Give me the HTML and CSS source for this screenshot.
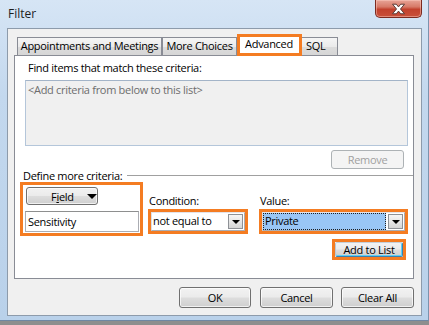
FILE: index.html
```html
<!DOCTYPE html>
<html>
<head>
<meta charset="utf-8">
<link rel="stylesheet" href="styles.css">
</head>
<body>
<div class="window">
  <div class="titlebar">
    <span class="title">Filter</span>
    <div class="close">
      <svg width="15" height="12" viewBox="0 0 15 12">
        <path d="M1.5 1.2 L5.3 1.2 L7.5 3.9 L9.7 1.2 L13.5 1.2 L9.5 6 L13.5 10.8 L9.7 10.8 L7.5 8.1 L5.3 10.8 L1.5 10.8 L5.5 6 Z" fill="#ffffff" stroke="#5a3a36" stroke-width="1" stroke-linejoin="round"/>
      </svg>
    </div>
  </div>
  <div class="client">
    <div class="tabs">
      <div class="tab w1">Appointments and Meetings</div>
      <div class="tab w2">More Choices</div>
      <div class="tab active w3">Advanced</div>
      <div class="tab w4">SQL</div>
    </div>
    <div class="panel">
      <div class="find-label">Find items that match these criteria:</div>
      <div class="listbox">&lt;Add criteria from below to this list&gt;</div>
      <div class="remove-row"><div class="btn disabled remove">Remove</div></div>
      <div class="define"><span class="define-text">Define more criteria:</span><span class="rule"></span></div>
      <div class="criteria">
        <div class="hl field-group">
          <div class="btn field-btn"><span class="field-text">F<u>i</u>eld</span><span class="tri big"></span></div>
          <div class="textbox">Sensitivity</div>
        </div>
        <div class="col cond-col">
          <div class="lbl">Condition:</div>
          <div class="hl combo-hl cond-hl">
            <div class="combo">
              <span class="combo-text">not equal to</span>
              <span class="drop"><span class="tri"></span></span>
            </div>
          </div>
        </div>
        <div class="col value-col">
          <div class="lbl">Value:</div>
          <div class="hl combo-hl value-hl">
            <div class="combo">
              <span class="combo-text selected">Private</span>
              <span class="drop"><span class="tri"></span></span>
            </div>
          </div>
        </div>
      </div>
      <div class="add-row">
        <div class="hl add-hl"><div class="btn default add">Add to List</div></div>
      </div>
    </div>
    <div class="footer">
      <div class="btn fbtn ok">OK</div>
      <div class="btn fbtn cancel">Cancel</div>
      <div class="btn fbtn clear">Clear All</div>
    </div>
  </div>
</div>
</body>
</html>
```

FILE: styles.css
```css
* { box-sizing: border-box; }
html, body { margin: 0; padding: 0; }
body {
  width: 429px;
  height: 325px;
  overflow: hidden;
  background: #8e8e8e;
  font-family: "Open Sans", "Noto Sans", sans-serif;
  font-size: 11px;
  letter-spacing: -0.3px;
  color: #000;
}
.window {
  width: 429px;
  height: 321px;
  background: linear-gradient(180deg, #d6e5f5 0%, #c3d8ee 30%, #b9d1ea 100%);
  border-right: 1px solid #7c93ad;
  border-bottom: 1px solid #6f87a3;
  padding-left: 7px;
}
.titlebar {
  height: 28px;
  display: flex;
  align-items: flex-start;
  justify-content: space-between;
  padding-right: 6px;
}
.title {
  font-size: 12px;
  letter-spacing: 0;
  margin-top: 5px;
  margin-left: 1px;
  color: #1e1e1e;
}
.close {
  width: 47px;
  height: 18px;
  border: 1px solid #7c2a20;
  border-top: none;
  border-radius: 0 0 5px 5px;
  background: linear-gradient(180deg, #e8a497 0%, #d77a68 40%, #c2412d 55%, #c9503a 100%);
  box-shadow: inset 0 0 0 1px rgba(255,210,200,0.45);
  display: flex;
  align-items: center;
  justify-content: center;
}
.client {
  width: 415px;
  height: 288px;
  border: 1px solid #8d9bab;
  background: #f0f0f0;
  display: flex;
  flex-direction: column;
}
.tabs {
  display: flex;
  align-items: flex-end;
  height: 22px;
  margin-top: 5px;
  margin-left: 9px;
  margin-bottom: -1px;
  position: relative;
  z-index: 2;
}
.tab {
  height: 18px;
  margin-bottom: 1px;
  border: 1px solid #898c95;
  border-bottom: none;
  background: linear-gradient(180deg, #f5f5f5 0%, #ebebeb 50%, #dcdcdc 51%, #d6d6d6 100%);
  text-align: center;
  line-height: 16px;
  white-space: nowrap;
}
.tab.w1 { width: 145px; }
.tab.w2 { width: 75px; }
.tab.w3 { width: 64px; }
.tab.w4 { width: 37px; text-align: left; padding-left: 4px; }
.tab.active {
  height: 22px;
  margin-bottom: 0;
  background: #ffffff;
  position: relative;
  line-height: 17px;
}
.tab.active::after {
  content: "";
  position: absolute;
  left: -1px;
  right: -2px;
  top: -1px;
  bottom: 0;
  border: 3px solid #f47c22;
}
.panel {
  margin-left: 6px;
  width: 400px;
  height: 224px;
  border: 1px solid #898c95;
  background: #ffffff;
  display: flex;
  flex-direction: column;
}
.find-label {
  padding-left: 13px;
  margin-top: 3px;
  line-height: 17px;
  height: 17px;
}
.listbox {
  margin-top: 4px;
  margin-left: 10px;
  width: 383px;
  height: 66px;
  border: 1px solid #b4c6da;
  border-top-color: #a3b4c8;
  background: #f0f0f0;
  color: #6d6d6d;
  padding: 1px 0 0 2px;
  line-height: 15px;
}
.remove-row {
  display: flex;
  justify-content: flex-end;
  padding-right: 9px;
  margin-top: 4px;
}
.btn {
  border: 1px solid #707070;
  border-radius: 3px;
  background: linear-gradient(180deg, #f2f2f2 0%, #ebebeb 48%, #dddddd 52%, #cfcfcf 100%);
  box-shadow: inset 0 0 0 1px rgba(255,255,255,0.7);
  display: flex;
  align-items: center;
  justify-content: center;
  white-space: nowrap;
}
.btn.disabled {
  border-color: #adb2b5;
  background: #f4f4f4;
  color: #a0a0a0;
  box-shadow: none;
}
.remove { width: 73px; height: 19px; }
.define {
  display: flex;
  align-items: center;
  height: 13px;
  padding-left: 8px;
}
.define-text { line-height: 13px; }
.rule {
  flex: 1;
  height: 2px;
  margin-left: 5px;
  margin-top: 1px;
  border-top: 1px solid #a0a0a0;
  border-bottom: 1px solid #ffffff;
}
.criteria {
  display: flex;
  align-items: flex-start;
  padding-left: 5px;
}
.hl {
  border: 3px solid #f47c22;
}
.field-group {
  width: 123px;
  height: 54px;
  display: flex;
  flex-direction: column;
  align-items: flex-start;
}
.field-btn {
  width: 72px;
  height: 18px;
  margin-top: 2px;
  margin-left: 3px;
  justify-content: flex-start;
  padding-left: 24px;
}
.field-text { width: 36px; }
.tri {
  display: inline-block;
  width: 0;
  height: 0;
  border-left: 4px solid transparent;
  border-right: 4px solid transparent;
  border-top: 4px solid #000;
}
.tri.big {
  border-left-width: 5px;
  border-right-width: 5px;
  border-top-width: 5px;
}
.textbox {
  margin-top: 6px;
  margin-left: 2px;
  width: 114px;
  height: 21px;
  border: 1px solid #abadb3;
  border-top-color: #8e8f8f;
  background: #fff;
  padding-left: 2px;
  line-height: 19px;
}
.col {
  display: flex;
  flex-direction: column;
}
.cond-col { margin-left: 5px; margin-top: 11px; }
.value-col { margin-left: 11px; margin-top: 11px; }
.lbl {
  height: 16px;
  line-height: 16px;
  padding-left: 1px;
}
.combo-hl { margin-top: 0; height: 25px; }
.cond-hl { width: 100px; }
.value-hl { width: 149px; }
.combo {
  height: 19px;
  border: 1px solid #abadb3;
  border-left-color: #dbdfe6;
  border-top-color: #e2e3ea;
  background: #fff;
  display: flex;
  align-items: center;
  padding: 0 1px 0 0;
}
.combo-text {
  flex: 1;
  height: 100%;
  padding-left: 1px;
  line-height: 16px;
}
.combo-text.selected {
  background: #99c6f5;
  outline: 1px dotted #202020;
  outline-offset: -1px;
  padding-left: 2px;
  margin-right: 2px;
}
.drop {
  width: 15px;
  height: 15px;
  border: 1px solid #8e9196;
  background: linear-gradient(180deg, #f6f6f6 0%, #e6e6e6 50%, #d4d4d4 100%);
  display: flex;
  align-items: center;
  justify-content: center;
}
.add-row {
  display: flex;
  justify-content: flex-end;
  padding-right: 7px;
  margin-top: 3px;
}
.add-hl { width: 74px; height: 21px; }
.add {
  width: 100%;
  height: 100%;
  border-color: #3c7fb1;
  border-left-color: #b9c9d6;
  border-top-color: #c4d0da;
  border-radius: 2px;
  box-shadow: inset -1px 0 0 #5ad1f5, inset 0 -1px 0 #5ad1f5;
  background: linear-gradient(180deg, #f2f2f2 0%, #ebebeb 48%, #dddddd 52%, #cfcfcf 100%);
  line-height: 13px;
}
.footer {
  display: flex;
  justify-content: flex-end;
  margin-top: 8px;
  padding-right: 7px;
}
.fbtn { height: 21px; }
.ok { width: 72px; }
.cancel { width: 73px; margin-left: 9px; }
.clear { width: 73px; margin-left: 8px; }
```
